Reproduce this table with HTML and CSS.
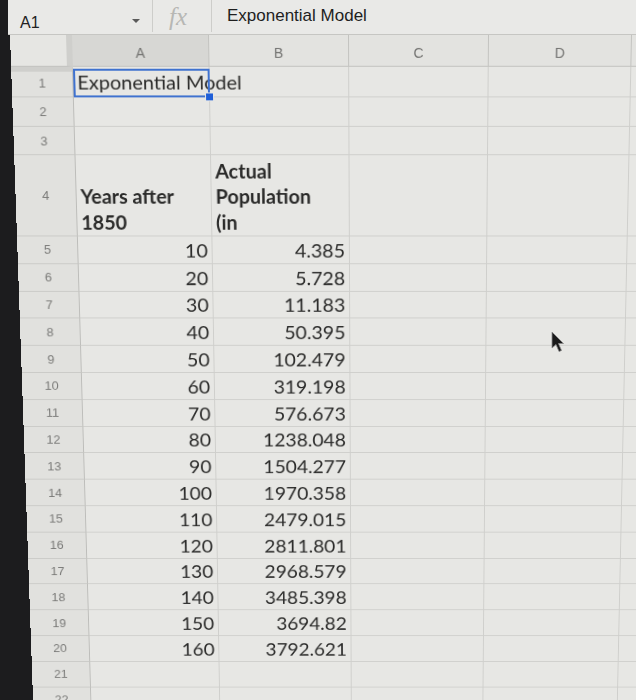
FILE: index.html
```html
<!DOCTYPE html>
<html>
<head>
<meta charset="utf-8">
<link rel="stylesheet" href="styles.css">
</head>
<body>
<div class="fbar">
  <div class="namebox"><span class="ref">A1</span><span class="caret"></span></div>
  <div class="sep"></div>
  <div class="fx">fx</div>
  <div class="sep"></div>
  <div class="ftext">Exponential Model</div>
</div>
<div class="sheet">
  <div class="row hdr">
    <div class="rh corner"></div>
    <div class="c a ch sel">A</div>
    <div class="c b ch">B</div>
    <div class="c cc ch">C</div>
    <div class="c d ch">D</div>
    <div class="c e ch"></div>
  </div>
  <div class="row r1">
    <div class="rh frz">1</div>
    <div class="c a title">Exponential Model</div>
    <div class="c b"></div><div class="c cc"></div><div class="c d"></div><div class="c e"></div>
  </div>
  <div class="row r2">
    <div class="rh">2</div>
    <div class="c a"></div><div class="c b"></div><div class="c cc"></div><div class="c d"></div><div class="c e"></div>
  </div>
  <div class="row r3">
    <div class="rh">3</div>
    <div class="c a"></div><div class="c b"></div><div class="c cc"></div><div class="c d"></div><div class="c e"></div>
  </div>
  <div class="row r4">
    <div class="rh">4</div>
    <div class="c a head">Years after<br>1850</div>
    <div class="c b head">Actual<br>Population<br>(in</div>
    <div class="c cc"></div><div class="c d"></div><div class="c e"></div>
  </div>
  <div class="row"><div class="rh">5</div><div class="c a num">10</div><div class="c b num">4.385</div><div class="c cc"></div><div class="c d"></div><div class="c e"></div></div>
  <div class="row"><div class="rh">6</div><div class="c a num">20</div><div class="c b num">5.728</div><div class="c cc"></div><div class="c d"></div><div class="c e"></div></div>
  <div class="row"><div class="rh">7</div><div class="c a num">30</div><div class="c b num">11.183</div><div class="c cc"></div><div class="c d"></div><div class="c e"></div></div>
  <div class="row"><div class="rh">8</div><div class="c a num">40</div><div class="c b num">50.395</div><div class="c cc"></div><div class="c d"></div><div class="c e"></div></div>
  <div class="row"><div class="rh">9</div><div class="c a num">50</div><div class="c b num">102.479</div><div class="c cc"></div><div class="c d"></div><div class="c e"></div></div>
  <div class="row"><div class="rh">10</div><div class="c a num">60</div><div class="c b num">319.198</div><div class="c cc"></div><div class="c d"></div><div class="c e"></div></div>
  <div class="row"><div class="rh">11</div><div class="c a num">70</div><div class="c b num">576.673</div><div class="c cc"></div><div class="c d"></div><div class="c e"></div></div>
  <div class="row"><div class="rh">12</div><div class="c a num">80</div><div class="c b num">1238.048</div><div class="c cc"></div><div class="c d"></div><div class="c e"></div></div>
  <div class="row"><div class="rh">13</div><div class="c a num">90</div><div class="c b num">1504.277</div><div class="c cc"></div><div class="c d"></div><div class="c e"></div></div>
  <div class="row"><div class="rh">14</div><div class="c a num">100</div><div class="c b num">1970.358</div><div class="c cc"></div><div class="c d"></div><div class="c e"></div></div>
  <div class="row"><div class="rh">15</div><div class="c a num">110</div><div class="c b num">2479.015</div><div class="c cc"></div><div class="c d"></div><div class="c e"></div></div>
  <div class="row"><div class="rh">16</div><div class="c a num">120</div><div class="c b num">2811.801</div><div class="c cc"></div><div class="c d"></div><div class="c e"></div></div>
  <div class="row"><div class="rh">17</div><div class="c a num">130</div><div class="c b num">2968.579</div><div class="c cc"></div><div class="c d"></div><div class="c e"></div></div>
  <div class="row"><div class="rh">18</div><div class="c a num">140</div><div class="c b num">3485.398</div><div class="c cc"></div><div class="c d"></div><div class="c e"></div></div>
  <div class="row"><div class="rh">19</div><div class="c a num">150</div><div class="c b num">3694.82</div><div class="c cc"></div><div class="c d"></div><div class="c e"></div></div>
  <div class="row"><div class="rh">20</div><div class="c a num">160</div><div class="c b num">3792.621</div><div class="c cc"></div><div class="c d"></div><div class="c e"></div></div>
  <div class="row"><div class="rh">21</div><div class="c a"></div><div class="c b"></div><div class="c cc"></div><div class="c d"></div><div class="c e"></div></div>
  <div class="row"><div class="rh">22</div><div class="c a"></div><div class="c b"></div><div class="c cc"></div><div class="c d"></div><div class="c e"></div></div>
  <div class="row"><div class="rh">23</div><div class="c a"></div><div class="c b"></div><div class="c cc"></div><div class="c d"></div><div class="c e"></div></div>
</div>
<svg class="cursor" width="16" height="24" viewBox="0 0 16 24">
  <path d="M1 1 L1 17 L5 13.5 L8 20.5 L10.5 19.5 L7.5 12.5 L12.5 12.5 Z" fill="#1a1a1a" stroke="#8a8a8a" stroke-width="0.8" stroke-linejoin="round"/>
</svg>
</body>
</html>
```

FILE: styles.css
```css
html, body {
  margin: 0;
  padding: 0;
}
body {
  background: #1c1c1e;
  width: 636px;
  height: 700px;
  overflow: hidden;
  position: relative;
  font-family: "Liberation Sans", Arial, sans-serif;
}
.fbar {
  height: 35px;
  margin-left: 8px;
  background: #e9e9e7;
  display: flex;
  align-items: stretch;
  border-bottom: 1px solid #c6c6c3;
  box-sizing: border-box;
}
.namebox {
  width: 144px;
  display: flex;
  align-items: flex-start;
  padding: 0 12px 0 12px;
  box-sizing: border-box;
}
.ref {
  flex: 1;
  font-size: 16px;
  color: #222;
  padding-top: 14px;
}
.caret {
  width: 0;
  height: 0;
  margin-top: 19px;
  border-left: 4px solid transparent;
  border-right: 4px solid transparent;
  border-top: 4px solid #5a5a5a;
}
.sep {
  width: 1px;
  background: #cdcdca;
  margin-bottom: 2px;
}
.fx {
  width: 58px;
  box-sizing: border-box;
  padding-left: 16px;
  padding-top: 3px;
  font-family: "Liberation Serif", serif;
  font-style: italic;
  font-size: 25px;
  color: #b7b7b4;
}
.ftext {
  padding-left: 15px;
  padding-top: 6px;
  font-size: 17px;
  color: #1e1e1e;
  white-space: nowrap;
}
.sheet {
  margin-left: 10px;
  width: 760px;
  background: #e7e7e4;
  transform-origin: 385px 0;
  transform: perspective(1000px) rotateX(-5.14deg);
}
.row {
  display: flex;
  height: 28.8px;
}
.row.hdr { height: 32px; }
.row.r1 { height: 31px; }
.row.r2 { height: 30px; }
.row.r3 { height: 29px; }
.row.r4 { height: 84px; }
.c, .rh {
  box-sizing: border-box;
  border-right: 1px solid #cfcfcc;
  border-bottom: 1px solid #cfcfcc;
  flex: none;
  display: flex;
}
.rh {
  width: 62px;
  background: #e1e1de;
  justify-content: center;
  align-items: center;
  font-size: 13px;
  color: #7a7a78;
  border-right-color: #bdbdba;
  border-bottom-color: #cacac7;
}
.rh.corner {
  background: #e6e6e3;
  border-right: 6px solid #cfcfcc;
  border-bottom-color: #c2c2bf;
}
.rh.frz {
  border-top: 5px solid #cfcfcc;
  padding-bottom: 2px;
}
.a { width: 137px; }
.b { width: 140px; }
.cc { width: 140px; }
.d { width: 143px; }
.e { width: 150px; }
.c {
  font-family: Lato, "Open Sans", sans-serif;
  font-size: 20px;
  line-height: 24px;
  color: #2a2a29;
  align-items: flex-end;
  padding: 0 4px 2px 4px;
  white-space: nowrap;
}
.ch {
  background: #e3e3e0;
  font-family: "Liberation Sans", Arial, sans-serif;
  font-size: 14px;
  color: #727270;
  justify-content: center;
  align-items: center;
  padding: 4px 0 0 0;
  border-right-color: #c3c3c0;
  border-bottom-color: #c2c2bf;
}
.ch.sel {
  background: #d7d7d4;
}
.num {
  justify-content: flex-end;
}
.head {
  font-weight: 700;
  line-height: 26.5px;
  padding-bottom: 1px;
}
.title {
  position: relative;
  overflow: visible;
  padding-bottom: 3px;
}
.title::after {
  content: "";
  position: absolute;
  left: 0;
  top: 2px;
  right: -1px;
  bottom: -1px;
  border: 2px solid #3f72cf;
}
.title::before {
  content: "";
  position: absolute;
  right: -5px;
  bottom: -5px;
  width: 7px;
  height: 7px;
  background: #1f5fd8;
  border: 1px solid #e7e7e4;
  z-index: 1;
}
.cursor {
  position: absolute;
  left: 551px;
  top: 331px;
}
```
